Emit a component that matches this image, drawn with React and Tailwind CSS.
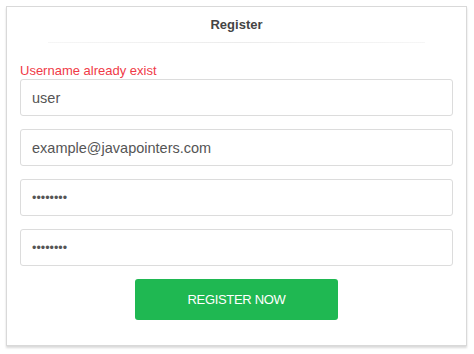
export default function App() {
    const baseCls =
        "block w-full h-[37px] rounded-[3px] border border-[#dcdcdc] bg-white px-[11px] text-[#555] outline-none";
    const textCls = `${baseCls} text-[14.5px]`;
    const passCls = `${baseCls} text-[12.5px]`;

    return (
        <div className="w-[474px] h-[354px] bg-white pt-[6px] pl-[6px]" style={{ fontFamily: '"Liberation Sans", Arial, sans-serif' }}>
            <div className="w-[461px] h-[340px] border border-[#d9d9d9] bg-white shadow-[0_2px_2px_rgba(0,0,0,0.15)] px-[13px]">
                {/* Header */}
                <div className="h-[35px] pt-[1px] flex items-center justify-center text-[13px] font-bold text-[#444]">
                    Register
                </div>
                <div className="mx-[28px] h-px bg-gradient-to-r from-[#f6f6f6] via-[#ececec] to-[#f6f6f6]" />

                {/* Form */}
                <div className="pt-[20px]">
                    <p className="text-[13px] leading-[16px] text-[#f03a47]">Username already exist</p>
                    <div className="flex flex-col gap-[13px]">
                        <input className={textCls} readOnly value="user" />
                        <input className={textCls} readOnly value="example@javapointers.com" />
                        <input className={passCls} type="password" readOnly value="12345678" />
                        <input className={passCls} type="password" readOnly value="12345678" />
                    </div>
                    <div className="mt-[13px] flex justify-center">
                        <button className="w-[203px] h-[41px] rounded-[3px] bg-[#1fb852] text-white text-[13px] tracking-tight">
                            REGISTER NOW
                        </button>
                    </div>
                </div>
            </div>
        </div>
    );
}
